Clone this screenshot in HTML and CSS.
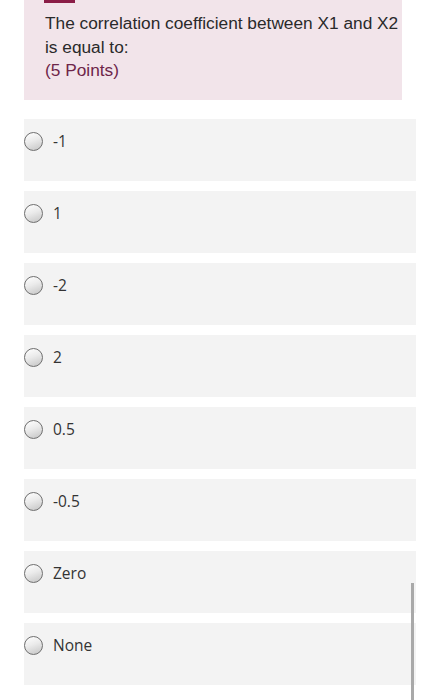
FILE: index.html
```html
<!DOCTYPE html>
<html lang="en">
<head>
<meta charset="utf-8">
<title>Question</title>
<link rel="stylesheet" href="styles.css">
</head>
<body>
<div class="page">
  <div class="card">
    <div class="accent"></div>
    <div class="question">The correlation coefficient between X1 and X2 is equal to:</div>
    <div class="points">(5 Points)</div>
  </div>
  <div class="options">
    <div class="option"><span class="radio"></span><span class="label">-1</span></div>
    <div class="option"><span class="radio"></span><span class="label">1</span></div>
    <div class="option"><span class="radio"></span><span class="label">-2</span></div>
    <div class="option"><span class="radio"></span><span class="label">2</span></div>
    <div class="option"><span class="radio"></span><span class="label">0.5</span></div>
    <div class="option"><span class="radio"></span><span class="label">-0.5</span></div>
    <div class="option"><span class="radio"></span><span class="label">Zero</span></div>
    <div class="option"><span class="radio"></span><span class="label">None</span></div>
  </div>
  <div class="scrollbar"></div>
</div>
</body>
</html>
```

FILE: styles.css
```css
html, body {
  margin: 0;
  padding: 0;
  background: #ffffff;
  overflow: hidden;
}

.page {
  position: relative;
  width: 425px;
  height: 700px;
  padding-left: 24px;
  box-sizing: border-box;
}

.card {
  position: relative;
  width: 378px;
  height: 100px;
  box-sizing: border-box;
  padding: 12px 0 0 21px;
  background: #f2e4ea;
  font-family: "Liberation Sans", Arial, sans-serif;
  font-size: 17.3px;
  line-height: 23.5px;
  color: #2a2a2a;
}

.accent {
  position: absolute;
  left: 20px;
  top: 0;
  width: 31px;
  height: 3px;
  background: #8b1d47;
}

.points {
  color: #6e2549;
}

.options {
  display: flex;
  flex-direction: column;
  gap: 10px;
  margin-top: 19px;
}

.option {
  display: flex;
  align-items: center;
  gap: 10px;
  width: 392px;
  height: 62px;
  box-sizing: border-box;
  padding-top: 13px;
  background: #f3f3f3;
}

.radio {
  width: 19px;
  height: 19px;
  box-sizing: border-box;
  border: 1px solid #6f6f6f;
  border-radius: 50%;
  background: linear-gradient(160deg, #ffffff 0%, #ebebeb 45%, #c4c4c4 100%);
  flex: none;
}

.label {
  font-family: "Open Sans", "Segoe UI", sans-serif;
  font-size: 15.5px;
  line-height: 19px;
  color: #333333;
}

.option {
  align-items: flex-start;
}

.scrollbar {
  position: absolute;
  left: 411px;
  top: 583px;
  width: 3px;
  height: 117px;
  background: #a9a9a9;
}
```
